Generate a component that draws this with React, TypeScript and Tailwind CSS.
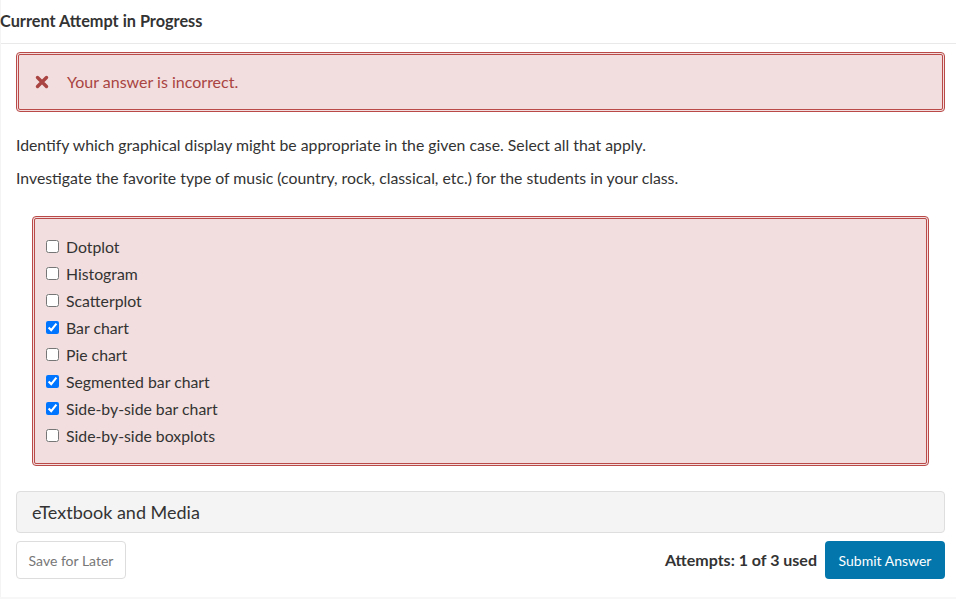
import React, { useState } from 'react';

const options = [
    { label: 'Dotplot', checked: false },
    { label: 'Histogram', checked: false },
    { label: 'Scatterplot', checked: false },
    { label: 'Bar chart', checked: true },
    { label: 'Pie chart', checked: false },
    { label: 'Segmented bar chart', checked: true },
    { label: 'Side-by-side bar chart', checked: true },
    { label: 'Side-by-side boxplots', checked: false },
];

export default function App() {
    const [checks, setChecks] = useState(options.map(o => o.checked));

    return (
        <div className="w-[956px] h-[599px] bg-[#f7f7f7] text-[#333] font-['Lato','Liberation_Sans',sans-serif]">
            <div className="h-[597px] bg-white border-l border-[#f4f4f4]">
                <div className="h-[44px] flex items-center border-b border-[#e9e9e9]">
                    <h2 className="text-[16.3px] font-bold text-[#333] -ml-px">Current Attempt in Progress</h2>
                </div>

                <div className="ml-[15px] mr-[11px]">
                    <div className="mt-2 h-[60px] flex items-center rounded border-[3px] border-double border-[#b94a48] bg-[#f2dede] text-[#a94442]">
                        <svg className="ml-[16px] w-[14px] h-[14px]" viewBox="0 0 14 14">
                            <path d="M2.5 2.5 L11.5 11.5 M11.5 2.5 L2.5 11.5" stroke="#a94442" strokeWidth="3.4" strokeLinecap="round" />
                        </svg>
                        <span className="ml-[18px] text-[16px]">Your answer is incorrect.</span>
                    </div>

                    <p className="mt-[23px] text-[15.8px] leading-[20px]">Identify which graphical display might be appropriate in the given case. Select all that apply.</p>
                    <p className="mt-[13px] text-[15.8px] leading-[20px]">Investigate the favorite type of music (country, rock, classical, etc.) for the students in your class.</p>

                    <div className="mx-4 mt-[28px] h-[250px] pt-[14px] rounded border-[3px] border-double border-[#b94a48] bg-[#f2dede]">
                        {options.map((o, i) => (
                            <label key={o.label} className="flex items-center h-[27px] pl-[11px] text-[15.8px] text-[#333]">
                                <input
                                    type="checkbox"
                                    className="w-[13px] h-[13px] m-0"
                                    checked={checks[i]}
                                    onChange={() => setChecks(c => c.map((v, j) => (j === i ? !v : v)))}
                                />
                                <span className="ml-[7px]">{o.label}</span>
                            </label>
                        ))}
                    </div>

                    <div className="mt-[25px] h-[42px] flex items-center px-[15px] rounded border border-[#dedede] bg-[#f4f4f4] text-[18px] text-[#333]">
                        eTextbook and Media
                    </div>

                    <div className="mt-[8px] flex items-center justify-between">
                        <button className="h-[38px] w-[110px] rounded border border-[#dddddd] bg-white text-[14px] text-[#777]">Save for Later</button>
                        <div className="flex items-center gap-2">
                            <span className="text-[16px] font-bold text-[#333]">Attempts: 1 of 3 used</span>
                            <button className="h-[38px] w-[120px] rounded bg-[#0377ac] text-[14px] text-white">Submit Answer</button>
                        </div>
                    </div>
                </div>
            </div>
        </div>
    );
}
